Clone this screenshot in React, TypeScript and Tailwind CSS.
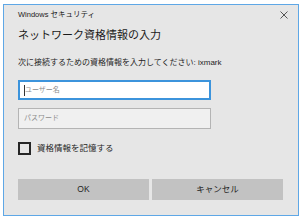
import React from "react";

const font = {
  fontFamily: '"Liberation Sans", "Noto Sans CJK JP", sans-serif',
};

export default function App() {
  return (
    <div className="w-[300px] h-[217px] bg-white pt-[4px] pl-[3px]" style={font}>
      <div className="w-[296px] h-[212px] border border-[#5ea7e6] bg-[#e6e6e6] flex flex-col pl-[14px]">
        {/* title bar */}
        <div className="h-[20px] flex items-center justify-between pr-[10px]">
          <span className="text-[7.5px] text-[#222]">Windows セキュリティ</span>
          <svg width="8" height="8" viewBox="0 0 8 8" className="text-[#444]">
            <path d="M0.5 0.5 L7.5 7.5 M7.5 0.5 L0.5 7.5" stroke="currentColor" strokeWidth="0.9" />
          </svg>
        </div>

        <div className="h-[20px] flex items-center text-[11px] text-[#1a1a1a]">
          ネットワーク資格情報の入力
        </div>

        <div className="mt-[11px] h-[14px] flex items-center text-[8px] text-[#1f1f1f]">
          次に接続するための資格情報を入力してください: ixmark
        </div>

        <div className="mt-[10px] w-[193px] h-[20px] border-2 border-[#3c94dc] bg-white flex items-center pl-[4px]">
          <span className="w-px h-[11px] bg-[#333]" />
          <span className="text-[7px] text-[#8c8c8c]">ユーザー名</span>
        </div>

        <div className="mt-[8px] w-[193px] h-[21px] border border-[#b4b4b4] bg-[#f0f0f0] flex items-center pl-[5px]">
          <span className="text-[7px] text-[#8c8c8c]">パスワード</span>
        </div>

        <div className="mt-[13px] h-[13px] flex items-center gap-[6px]">
          <span className="w-[13px] h-[13px] border-2 border-[#262626]" />
          <span className="text-[8.5px] text-[#1f1f1f]">資格情報を記憶する</span>
        </div>

        <div className="mt-[24px] flex gap-[3px]">
          <button className="w-[131px] h-[21px] bg-[#c2c2c2] text-[8.5px] text-[#1f1f1f] flex items-center justify-center">
            OK
          </button>
          <button className="w-[131px] h-[21px] bg-[#c2c2c2] text-[8.5px] text-[#1f1f1f] flex items-center justify-center">
            キャンセル
          </button>
        </div>
      </div>
    </div>
  );
}
